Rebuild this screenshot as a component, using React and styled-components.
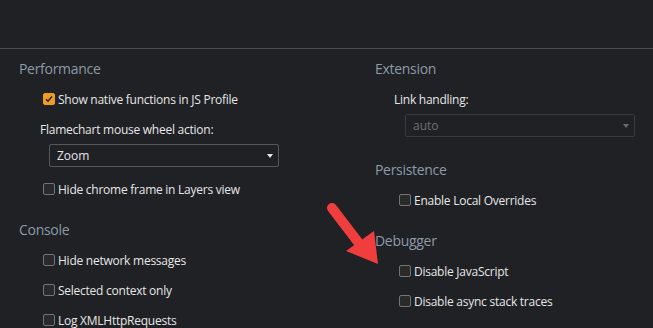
import styled, { createGlobalStyle } from "styled-components";

const GlobalStyle = createGlobalStyle`
  html, body {
    margin: 0;
    background: #202124;
  }
  body {
    font-family: "Open Sans", "Noto Sans", sans-serif;
  }
`;

const Page = styled.div`
  position: relative;
  width: 653px;
  height: 328px;
  overflow: hidden;
  background: #202124;
  color: #e4e4e4;
`;

const TopBar = styled.div`
  height: 48px;
  border-bottom: 1px solid #4a4c50;
`;

const Columns = styled.div`
  display: grid;
  grid-template-columns: 356px 1fr;
  padding: 10px 0 0 19px;
`;

const Column = styled.div`
  display: flex;
  flex-direction: column;
  gap: 16px;
`;

const Section = styled.section`
  display: flex;
  flex-direction: column;
`;

const Header = styled.h2`
  margin: 0 0 5px;
  height: 20px;
  line-height: 20px;
  font-size: 14px;
  font-weight: 400;
  color: #8d9aa7;
  letter-spacing: -0.3px;
`;

const Row = styled.label`
  display: flex;
  align-items: center;
  height: 30px;
  padding-left: ${(p) => p.$indent ?? 24}px;
  font-size: 12px;
  letter-spacing: -0.25px;
  color: #e6e6e6;
`;

const Box = styled.span`
  box-sizing: border-box;
  width: 12px;
  height: 12px;
  margin-right: 3px;
  border-radius: 2px;
  display: flex;
  align-items: center;
  justify-content: center;
  background: ${(p) => (p.$checked ? "#f29c1f" : "#2a2a2b")};
  border: 1px solid ${(p) => (p.$checked ? "#f29c1f" : "#747474")};
`;

const Select = styled.div`
  box-sizing: border-box;
  margin: 0 0 7px 30px;
  width: 230px;
  height: 23px;
  padding: 0 5px 0 7px;
  display: flex;
  align-items: center;
  justify-content: space-between;
  border: 1px solid ${(p) => (p.$disabled ? "#3a3b3d" : "#55575a")};
  border-radius: 2px;
  font-size: 12px;
  color: ${(p) => (p.$disabled ? "#707070" : "#e6e6e6")};
`;

const Caret = styled.span`
  width: 0;
  height: 0;
  border-left: 3.5px solid transparent;
  border-right: 3.5px solid transparent;
  border-top: 4px solid ${(p) => (p.$disabled ? "#6a6a6a" : "#e8e8e8")};
`;

const Pointer = styled.svg`
  position: absolute;
  left: 320px;
  top: 196px;
`;

const Checkbox = ({ checked, children }) => (
  <Row>
    <Box $checked={checked}>
      {checked && (
        <svg width="8" height="8" viewBox="0 0 8 8">
          <path d="M1 4.2 L3 6.2 L7 1.6" fill="none" stroke="#202124" strokeWidth="1.6" />
        </svg>
      )}
    </Box>
    {children}
  </Row>
);

const Dropdown = ({ value, disabled }) => (
  <Select $disabled={disabled}>
    {value}
    <Caret $disabled={disabled} />
  </Select>
);

export default function App() {
  return (
    <Page>
      <GlobalStyle />
      <TopBar />
      <Columns>
        <Column>
          <Section>
            <Header>Performance</Header>
            <Checkbox checked>Show native functions in JS Profile</Checkbox>
            <Row $indent={21}>Flamechart mouse wheel action:</Row>
            <Dropdown value="Zoom" />
            <Checkbox>Hide chrome frame in Layers view</Checkbox>
          </Section>
          <Section>
            <Header>Console</Header>
            <Checkbox>Hide network messages</Checkbox>
            <Checkbox>Selected context only</Checkbox>
            <Checkbox>Log XMLHttpRequests</Checkbox>
          </Section>
        </Column>
        <Column>
          <Section>
            <Header>Extension</Header>
            <Row $indent={19}>Link handling:</Row>
            <Dropdown value="auto" disabled />
          </Section>
          <Section>
            <Header>Persistence</Header>
            <Checkbox>Enable Local Overrides</Checkbox>
          </Section>
          <Section>
            <Header>Debugger</Header>
            <Checkbox>Disable JavaScript</Checkbox>
            <Checkbox>Disable async stack traces</Checkbox>
          </Section>
        </Column>
      </Columns>
      <Pointer width="70" height="75" viewBox="0 0 70 75">
        <line x1="12" y1="12" x2="38" y2="46" stroke="#f03e3e" strokeWidth="10" strokeLinecap="round" />
        <polygon points="26,55 54,35 58,68" fill="#f03e3e" />
      </Pointer>
    </Page>
  );
}
